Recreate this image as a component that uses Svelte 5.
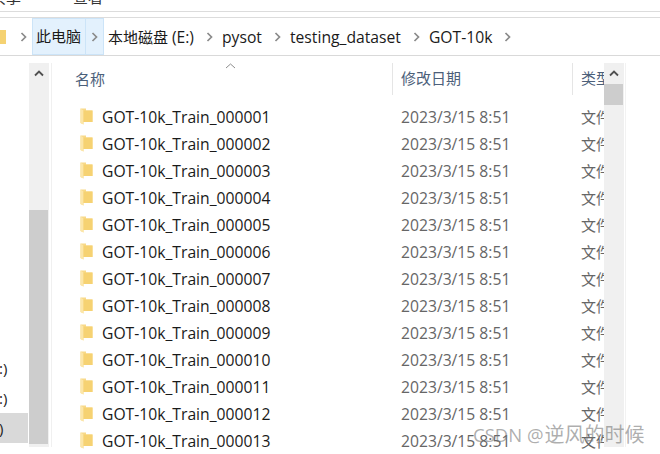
<script>
  const crumbs = ['pysot', 'testing_dataset', 'GOT-10k'];
  const rows = Array.from({ length: 13 }, (_, i) => 'GOT-10k_Train_' + String(i + 1).padStart(6, '0'));
</script>

{#snippet chevron()}
  <svg class="chev" width="7" height="10" viewBox="0 0 7 10"><path d="M1.5 1 L5.5 5 L1.5 9" fill="none" stroke="#8a8a8a" stroke-width="1.7" /></svg>
{/snippet}

{#snippet arrowUp()}
  <svg width="10" height="7" viewBox="0 0 10 7"><path d="M1 5.5 L5 1.5 L9 5.5" fill="none" stroke="#505050" stroke-width="1.8" /></svg>
{/snippet}

<div class="window">
  <div class="ribbon">
    <span class="tab first">共享</span>
    <span class="tab">查看</span>
  </div>
  <div class="gap"></div>

  <nav class="crumbs">
    <svg class="root" width="6" height="16" viewBox="0 0 6 16"><path d="M0 1 H6 V15 H0 Z" fill="#f5d272" /></svg>
    <span class="root-chev">{@render chevron()}</span>
    <div class="current">
      <span class="current-label">此电脑</span>
      <span class="current-arrow">{@render chevron()}</span>
    </div>
    <span class="crumb drive">本地磁盘 <span class="latin">(E:)</span></span>
    <span class="crumb-chev">{@render chevron()}</span>
    {#each crumbs as c}
      <span class="crumb latin">{c}</span>
      <span class="crumb-chev">{@render chevron()}</span>
    {/each}
  </nav>

  <div class="body">
    <aside class="side">
      <div class="side-items">
        <div class="side-item">:)</div>
        <div class="side-item">:)</div>
        <div class="side-item selected">)</div>
      </div>
      <div class="side-scroll">
        <div class="scroll-btn">{@render arrowUp()}</div>
        <div class="side-thumb"></div>
      </div>
    </aside>

    <main class="list">
      <div class="head">
        <div class="col-name">
          <span>名称</span>
          <svg class="sort" width="11" height="6" viewBox="0 0 11 6"><path d="M1 5 L5.5 1 L10 5" fill="none" stroke="#8d8d8d" stroke-width="1" /></svg>
        </div>
        <div class="col-date">修改日期</div>
        <div class="col-type">类型</div>
      </div>
      {#each rows as name}
        <div class="row">
          <div class="col-name">
            <svg class="folder" width="13" height="17" viewBox="0 0 13 17">
              <path d="M0.5 0.5 H6 V2.5 H12.5 V14 H3.5 V16.5 L0.5 15 Z" fill="#f8d98a" />
              <path d="M0.5 0.5 L3.5 2.5 V16.5 L0.5 15 Z" fill="#fce6a8" />
              <path d="M6 2.5 H12.5 V14 H3.5 V2.5 Z" fill="#f6d272" />
            </svg>
            <span class="file">{name}</span>
          </div>
          <div class="col-date">2023/3/15 8:51</div>
          <div class="col-type">文件夹</div>
        </div>
      {/each}
    </main>

    <div class="main-scroll">
      <div class="scroll-btn">{@render arrowUp()}</div>
      <div class="main-thumb"></div>
    </div>
    <div class="rest"></div>
  </div>

  <div class="watermark">CSDN @<span class="mark-cjk">逆风的时候</span></div>
</div>

<style>
  :global(body) {
    margin: 0;
    background: #fff;
  }

  .window {
    position: relative;
    width: 660px;
    height: 454px;
    overflow: hidden;
    background: #fff;
    font-family: "Open Sans", "Noto Sans CJK SC", sans-serif;
    color: #1a1a1a;
  }

  .ribbon {
    height: 11px;
    border-bottom: 1px solid #dcdcdc;
    overflow: hidden;
    display: flex;
    align-items: flex-start;
    font-size: 15px;
    line-height: 8px;
    color: #333;
  }

  .tab {
    margin-left: 52px;
    margin-top: -7px;
  }

  .tab.first {
    margin-left: -9px;
  }

  .gap {
    height: 5px;
    border-bottom: 1px solid #dcdcdc;
  }

  .crumbs {
    height: 37px;
    border-bottom: 1px solid #d9d9d9;
    display: flex;
    align-items: center;
    font-size: 15px;
    white-space: nowrap;
  }

  .root {
    flex: none;
  }

  .root-chev {
    display: flex;
    margin-left: 14px;
    margin-right: 5px;
  }

  .current {
    display: flex;
    align-self: stretch;
    background: #e3f1fd;
    border: 1px solid #cce4f8;
    box-sizing: border-box;
  }

  .current-label {
    width: 53px;
    padding-left: 3px;
    box-sizing: border-box;
    line-height: 35px;
    border-right: 1px solid #cce4f8;
  }

  .current-arrow {
    width: 17px;
    display: flex;
    align-items: center;
    justify-content: center;
  }

  .crumb.drive {
    margin-left: 4px;
  }

  .latin {
    font-size: 15.7px;
  }

  .crumb-chev {
    display: flex;
    margin: 0 9px 0 12px;
  }

  .body {
    display: flex;
    padding-top: 7px;
    height: 391px;
    box-sizing: border-box;
  }

  .side {
    flex: none;
    display: flex;
    width: 51px;
    border-right: 1px solid #f0f0f0;
  }

  .side-items {
    width: 28px;
    margin-right: 1px;
    padding-top: 290px;
    font-size: 15px;
    box-sizing: border-box;
  }

  .side-item {
    height: 30px;
    line-height: 30px;
    margin-left: -1px;
    color: #222;
    white-space: nowrap;
  }

  .side-item.selected {
    background: #d9d9d9;
    margin-left: 0;
    text-indent: -1px;
  }

  .side-scroll {
    width: 20px;
    background: #f0f0f0;
    display: flex;
    flex-direction: column;
  }

  .scroll-btn {
    height: 21px;
    display: flex;
    align-items: center;
    justify-content: center;
    flex: none;
  }

  .side-thumb {
    height: 234px;
    margin-top: 126px;
    width: 19px;
    background: #cdcdcd;
  }

  .list {
    flex: none;
    width: 552px;
    position: relative;
    font-size: 15.7px;
  }

  .head {
    display: flex;
    height: 33px;
    margin-bottom: 7px;
    color: #4c607a;
    font-size: 15px;
  }

  .head .col-name {
    padding-left: 23px;
    position: relative;
    align-items: center;
    border-right: 1px solid #e5e5e5;
    box-sizing: border-box;
    height: 32px;
    padding-bottom: 2px;
  }

  .head .col-date {
    height: 32px;
    line-height: 30px;
    border-right: 1px solid #e5e5e5;
    box-sizing: border-box;
  }

  .head .col-type {
    line-height: 30px;
  }

  .sort {
    position: absolute;
    left: 173px;
    top: 0;
  }

  .row {
    display: flex;
    height: 27px;
    align-items: center;
    color: #666;
  }

  .col-name {
    width: 341px;
    flex: none;
    display: flex;
    align-items: center;
    box-sizing: border-box;
    padding-left: 28px;
  }

  .col-date {
    width: 180px;
    flex: none;
    padding-left: 8px;
    box-sizing: border-box;
  }

  .col-type {
    width: 31px;
    flex: none;
    padding-left: 8px;
    box-sizing: border-box;
    overflow: hidden;
    white-space: nowrap;
    font-size: 15px;
  }

  .folder {
    flex: none;
    margin-right: 9px;
  }

  .file {
    color: #1a1a1a;
  }

  .main-scroll {
    flex: none;
    width: 20px;
    background: #f0f0f0;
  }

  .main-thumb {
    height: 21px;
    width: 19px;
    background: #cdcdcd;
  }

  .rest {
    flex: none;
    width: 1px;
    margin-left: 1px;
    background: #f2f2f2;
  }

  .watermark {
    position: absolute;
    left: 473px;
    top: 423px;
    font-size: 18.5px;
    line-height: 24px;
    color: rgba(120, 120, 120, 0.6);
    white-space: nowrap;
  }

  .mark-cjk {
    font-size: 20px;
    margin-left: 1px;
  }
</style>
